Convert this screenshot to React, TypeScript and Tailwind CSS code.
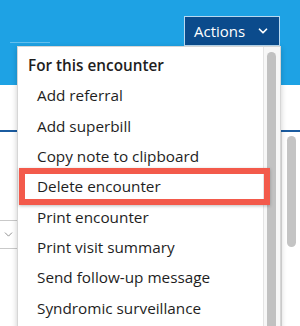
import { ChevronDown } from "lucide-react";

const items = [
  "Add referral",
  "Add superbill",
  "Copy note to clipboard",
  "Delete encounter",
  "Print encounter",
  "Print visit summary",
  "Send follow-up message",
  "Syndromic surveillance",
];

const App = () => {
  return (
    <div className="relative w-[300px] h-[326px] overflow-hidden bg-white font-['Open_Sans',sans-serif]">
      {/* page header band */}
      <div className="relative h-[85px] bg-[#1ea2e4] flex justify-end items-start pt-[16px] pr-[20px]">
        <div className="absolute left-[10px] top-[42px] w-[40px] h-px bg-[#64c0ee]" />
        <button className="h-[30px] w-[96px] bg-[#0b4b8c] border border-[#b9d9f0] text-white text-[15px] flex items-center pl-[9px] gap-[11px]">
          <span>Actions</span>
          <ChevronDown className="size-[14px]" strokeWidth={3} />
        </button>
      </div>

      {/* page body */}
      <div className="flex h-[241px]">
        <div className="flex-1 flex flex-col">
          <div className="mt-[45px] h-[2px] bg-[#1b5ca0]" />
          <div className="mt-[88px] h-[29px] w-[24px] border-y border-r border-[#c9c9c9] flex items-center">
            <ChevronDown className="size-[13px] ml-[2px] text-[#777]" strokeWidth={1.5} />
          </div>
        </div>
        <div className="w-[19px] flex flex-col">
          <div className="mt-[45px] h-[2px] bg-[#1b5ca0]" />
          <div className="flex-1 border-l border-[#dedede] pt-[4px] pl-[5px]">
            <div className="w-[9px] h-[111px] rounded-full bg-[#c4c4c4]" />
          </div>
        </div>
      </div>

      {/* dropdown menu */}
      <div className="absolute left-[17px] top-[46px] w-[264px] h-[290px] bg-white border border-[#d6d6d6] shadow-[0_2px_6px_rgba(0,0,0,0.2)] flex">
        <div className="flex-1 pt-[3px] text-[15.3px] text-[#1e1e1e]">
          <div className="h-[30.4px] flex items-center pl-[10px] font-semibold">
            For this encounter
          </div>
          {items.map((item) => (
            <div key={item} className="h-[30.4px] flex items-center pl-[19px]">
              {item}
            </div>
          ))}
        </div>
        <div className="w-[17px] bg-[#f7f7f7] border-l border-[#e4e4e4] pt-[5px] pl-[3px]">
          <div className="w-[9px] h-[300px] rounded-full bg-[#c1c1c1]" />
        </div>
        <div className="absolute left-[1px] top-[121px] w-[251px] h-[37px] border-[6px] border-[#f35a4b] shadow-[0_1px_3px_rgba(0,0,0,0.25)]" />
      </div>
    </div>
  );
};

export default App;
